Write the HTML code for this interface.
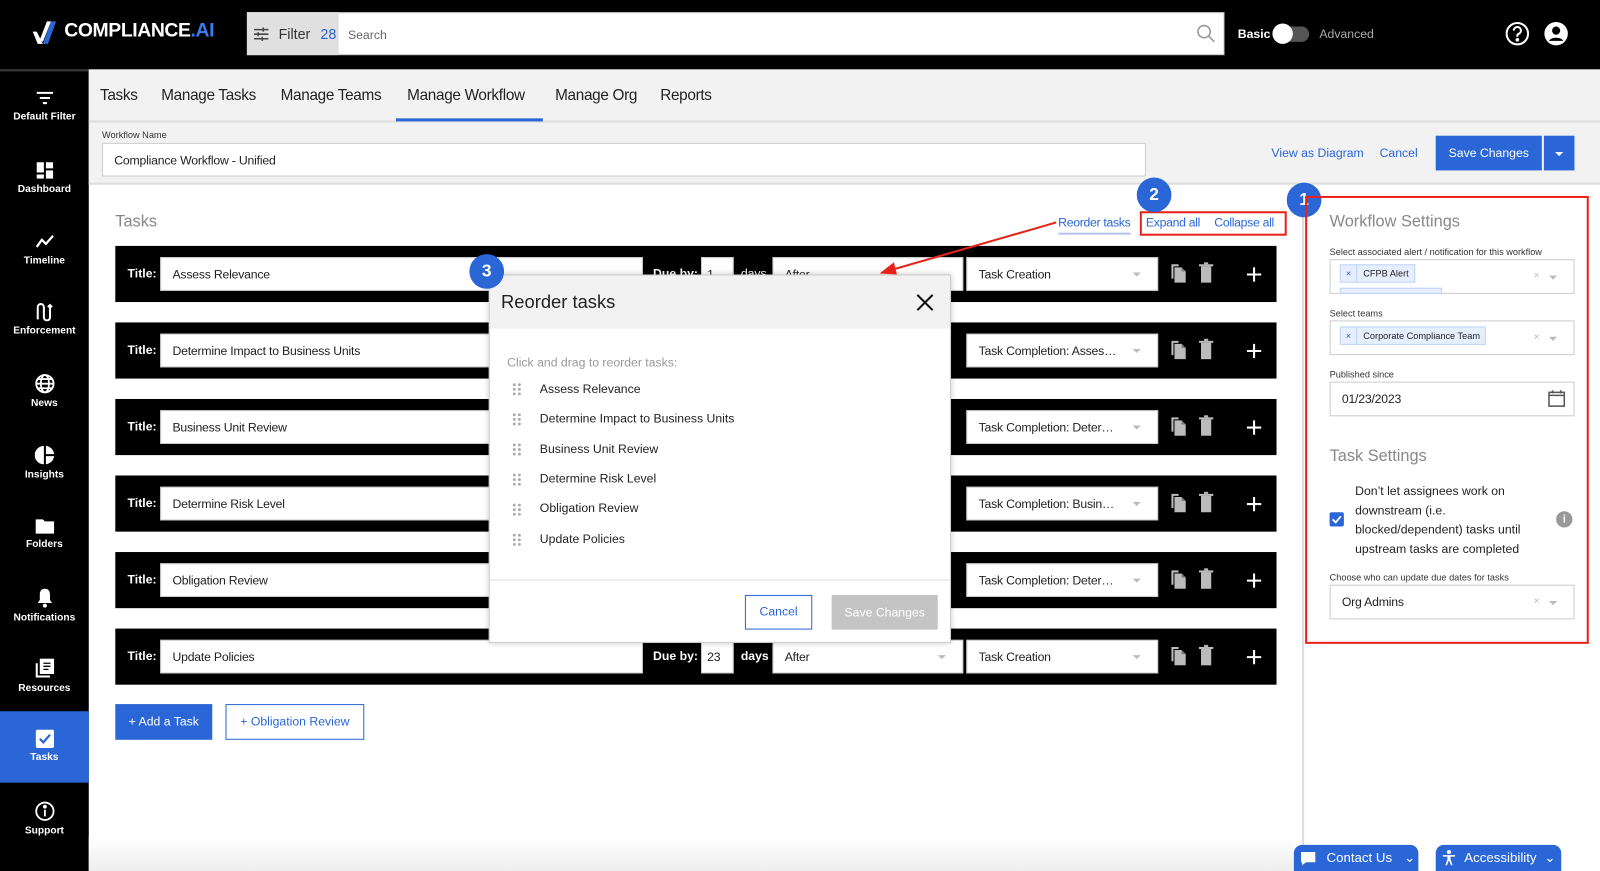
<!DOCTYPE html>
<html><head><meta charset="utf-8"><style>
*{box-sizing:border-box;margin:0;padding:0}
html,body{width:1600px;height:871px;overflow:hidden;background:#fff}
#w{position:absolute;left:0;top:0;width:1568px;height:854px;transform:scale(1.020408);transform-origin:0 0;font-family:"Liberation Sans",sans-serif;color:#222;overflow:hidden}
.a{position:absolute}
.t{position:absolute;white-space:nowrap}
.blue{color:#2a66d6}
.nav{position:absolute;left:0;width:87px;text-align:center;color:#fff;font-size:10px;font-weight:bold}
.nav svg{display:block;margin:0 auto 4px}
.row{position:absolute;left:113px;width:1138px;height:55px;background:#000}
.inp{position:absolute;background:#fff;border:1px solid #ccc;font-size:12px;padding-left:11px;display:flex;align-items:center;white-space:nowrap;overflow:hidden;letter-spacing:-0.2px}
.lbl{position:absolute;color:#fff;font-size:12px;font-weight:bold}
.dd{position:absolute;width:0;height:0;border-left:4px solid transparent;border-right:4px solid transparent;border-top:4px solid #bbb}
.badge{position:absolute;width:34px;height:34px;border-radius:50%;background:#2a66d6;color:#fff;font-weight:bold;font-size:17px;text-align:center;line-height:34px}
.small{font-size:9px;color:#333}
.tag{position:absolute;background:#e6efff;border:1px solid #bcd3f7;font-size:9px;height:18px;line-height:16px;padding:0 5px 0 0;white-space:nowrap}
.tag b{display:inline-block;width:16px;text-align:center;color:#2a66d6;font-weight:normal;border-right:1px solid #bcd3f7;margin-right:6px}
.tab{position:absolute;top:85px;font-size:15px;letter-spacing:-0.3px;white-space:nowrap}
</style></head><body><div id="w">
<div class="a" style="left:0;top:0;width:1568px;height:68px;background:#000"></div>
<svg class="a" style="left:30px;top:19px" width="30" height="25" viewBox="0 0 30 25"><path d="M2 12 L7 24 L12 24 L6 12Z" fill="#fff"/><path d="M12 24 L20 2 L25 2 L17 24Z" fill="#2a66d6"/><path d="M9 20 L16 2 L20 2 L12 22Z" fill="#fff"/></svg>
<div class="t" style="left:63px;top:20px;color:#fff;font-weight:bold;font-size:19px;letter-spacing:-0.4px">COMPLIANCE<span style="color:#3a7bf0">.AI</span></div>
<div class="a" style="left:242px;top:12px;width:958px;height:42px;background:#fff;border:1px solid #ccc"></div>
<div class="a" style="left:242px;top:12px;width:90px;height:42px;background:#e0e0e0"></div>
<svg class="a" style="left:248px;top:26px" width="16" height="15" viewBox="0 0 16 15" stroke="#444" stroke-width="1.5"><path d="M1 3H15M1 7.5H15M1 12H15M10 1V5M5 5.5V9.5M9 10V14"/></svg>
<div class="t" style="left:273px;top:25px;font-size:14px;color:#333">Filter <span class="blue" style="margin-left:6px">28</span></div>
<div class="t" style="left:341px;top:27px;font-size:12px;color:#666">Search</div>
<svg class="a" style="left:1172px;top:23px" width="20" height="20" viewBox="0 0 20 20" fill="none" stroke="#999" stroke-width="1.6"><circle cx="8" cy="8" r="6"/><path d="M12.5 12.5L18 18"/></svg>
<div class="t" style="left:1213px;top:26px;color:#fff;font-size:12px;font-weight:bold">Basic</div>
<div class="a" style="left:1247px;top:26px;width:36px;height:15px;border-radius:8px;background:#555"></div>
<div class="a" style="left:1247px;top:23px;width:20px;height:20px;border-radius:50%;background:#fff"></div>
<div class="t" style="left:1293px;top:26px;color:#aaa;font-size:12px">Advanced</div>
<svg class="a" style="left:1475px;top:21px" width="24" height="24" viewBox="0 0 24 24" fill="none" stroke="#fff" stroke-width="2"><circle cx="12" cy="12" r="10.5"/><path d="M8.5 9a3.5 3.5 0 1 1 4.5 3.3c-.7.3-1 .8-1 1.7v1"/><circle cx="12" cy="18" r=".8" fill="#fff"/></svg>
<svg class="a" style="left:1513px;top:21px" width="24" height="24" viewBox="0 0 24 24"><circle cx="12" cy="12" r="11.5" fill="#fff"/><circle cx="12" cy="9" r="4" fill="#000"/><path d="M5 19c2-4 12-4 14 0" fill="#000"/></svg>
<div class="a" style="left:0;top:68px;width:87px;height:786px;background:#000;border-top:2px solid #333"></div>
<div class="a" style="left:0;top:697px;width:87px;height:70px;background:#2a66d6"></div>
<div class="nav" style="top:89px"><svg width="18" height="16" viewBox="0 0 18 16" stroke="#fff" stroke-width="2"><path d="M1 2H17M4 7H14M7 12H11"/></svg>Default Filter</div>
<div class="nav" style="top:158px"><svg width="18" height="18" viewBox="0 0 18 18" fill="#fff"><rect x="1" y="1" width="7" height="10"/><rect x="10" y="1" width="7" height="6"/><rect x="10" y="9" width="7" height="8"/><rect x="1" y="13" width="7" height="4"/></svg>Dashboard</div>
<div class="nav" style="top:228px"><svg width="20" height="18" viewBox="0 0 20 18" fill="none" stroke="#fff" stroke-width="2.2"><path d="M2 14L7 7L11 11L18 3"/></svg>Timeline</div>
<div class="nav" style="top:297px"><svg width="20" height="18" viewBox="0 0 20 18" fill="none" stroke="#fff" stroke-width="2"><path d="M3 16V4a3 3 0 0 1 6 0v10a3 3 0 0 0 6 0V2M13 4l2-2 2 2"/></svg>Enforcement</div>
<div class="nav" style="top:366px"><svg width="20" height="20" viewBox="0 0 20 20" fill="none" stroke="#fff" stroke-width="1.8"><circle cx="10" cy="10" r="8.5"/><ellipse cx="10" cy="10" rx="4" ry="8.5"/><path d="M1.5 10H18.5M3 5.5H17M3 14.5H17"/></svg>News</div>
<div class="nav" style="top:436px"><svg width="20" height="20" viewBox="0 0 20 20" fill="#fff"><path d="M9 1A9 9 0 0 0 9 19Z"/><path d="M11 1A9 9 0 0 1 19 9H11Z"/><path d="M11 11H19A9 9 0 0 1 11 19Z"/></svg>Insights</div>
<div class="nav" style="top:507px"><svg width="20" height="17" viewBox="0 0 20 17" fill="#fff"><path d="M1 2h7l2 2h9v12H1Z"/></svg>Folders</div>
<div class="nav" style="top:576px"><svg width="18" height="20" viewBox="0 0 18 20" fill="#fff"><path d="M9 1c-4 0-5 3-5 6v5l-2 3h14l-2-3V7c0-3-1-6-5-6z"/><circle cx="9" cy="17.5" r="2"/></svg>Notifications</div>
<div class="nav" style="top:645px"><svg width="20" height="20" viewBox="0 0 20 20" fill="none" stroke="#fff" stroke-width="2"><rect x="6" y="1.5" width="12" height="13" fill="#fff"/><path d="M2 5v13h13"/><path d="M8.5 5h7M8.5 8h7M8.5 11h5" stroke="#000" stroke-width="1.3"/></svg>Resources</div>
<div class="nav" style="top:715px"><svg width="18" height="18" viewBox="0 0 18 18"><rect x="0" y="0" width="18" height="18" rx="2" fill="#fff"/><path d="M4 9l3.5 3.5L14 5" fill="none" stroke="#2a66d6" stroke-width="2.2"/></svg>Tasks</div>
<div class="nav" style="top:785px"><svg width="20" height="20" viewBox="0 0 20 20" fill="none" stroke="#fff" stroke-width="1.8"><circle cx="10" cy="10" r="8.5"/><path d="M10 8.5V15"/><circle cx="10" cy="5.5" r="1" fill="#fff"/></svg>Support</div>
<div class="a" style="left:87px;top:68px;width:1481px;height:113px;background:#f2f2f2;border-bottom:2px solid #ddd"></div>
<div class="a" style="left:87px;top:118px;width:1481px;height:2px;background:#ddd"></div>
<div class="a" style="left:388px;top:116px;width:144px;height:3px;background:#2a66d6"></div>
<div class="tab" style="left:98px">Tasks</div>
<div class="tab" style="left:158px">Manage Tasks</div>
<div class="tab" style="left:275px">Manage Teams</div>
<div class="tab" style="left:399px">Manage Workflow</div>
<div class="tab" style="left:544px">Manage Org</div>
<div class="tab" style="left:647px">Reports</div>
<div class="t small" style="left:100px;top:127px">Workflow Name</div>
<div class="inp" style="left:100px;top:140px;width:1023px;height:33px;font-size:12px">Compliance Workflow - Unified</div>
<div class="t blue" style="left:1246px;top:143px;font-size:12px">View as Diagram</div>
<div class="t blue" style="left:1352px;top:143px;font-size:12px">Cancel</div>
<div class="a" style="left:1407px;top:133px;width:104px;height:34px;background:#2a66d6;color:#fff;font-size:12px;text-align:center;line-height:34px">Save Changes</div>
<div class="a" style="left:1513px;top:133px;width:30px;height:34px;background:#2a66d6"></div>
<div class="dd" style="left:1524px;top:149px;border-top-color:#fff"></div>
<div class="a" style="left:1276px;top:181px;width:2px;height:673px;background:#ddd"></div>
<div class="t" style="left:113px;top:209px;font-size:16px;color:#888">Tasks</div>
<div class="t blue" style="left:1037px;top:211px;font-size:12px;border-bottom:2px solid #b8c4f0;padding-bottom:3px;letter-spacing:-0.3px">Reorder tasks</div>
<div class="a" style="left:1117px;top:207px;width:144px;height:24px;border:2px solid #e8231c"></div>
<div class="t blue" style="left:1123px;top:211px;font-size:12px;letter-spacing:-0.3px">Expand all</div>
<div class="t blue" style="left:1190px;top:211px;font-size:12px;letter-spacing:-0.3px">Collapse all</div>
<div class="row" style="top:241px"></div><div class="row" style="top:316px"></div><div class="row" style="top:391px"></div><div class="row" style="top:466px"></div><div class="row" style="top:541px"></div><div class="row" style="top:616px"></div>
<div class="lbl" style="left:125px;top:261px">Title:</div><div class="inp" style="left:157px;top:252px;width:473px;height:33px">Assess Relevance</div>
<div class="lbl" style="left:125px;top:336px">Title:</div><div class="inp" style="left:157px;top:327px;width:473px;height:33px">Determine Impact to Business Units</div>
<div class="lbl" style="left:125px;top:411px">Title:</div><div class="inp" style="left:157px;top:402px;width:473px;height:33px">Business Unit Review</div>
<div class="lbl" style="left:125px;top:486px">Title:</div><div class="inp" style="left:157px;top:477px;width:473px;height:33px">Determine Risk Level</div>
<div class="lbl" style="left:125px;top:561px">Title:</div><div class="inp" style="left:157px;top:552px;width:473px;height:33px">Obligation Review</div>
<div class="lbl" style="left:125px;top:636px">Title:</div><div class="inp" style="left:157px;top:627px;width:473px;height:33px">Update Policies</div>
<div class="lbl" style="left:640px;top:261px">Due by:</div><div class="inp" style="left:687px;top:252px;width:32px;height:33px;padding-left:5px">1</div><div class="lbl" style="left:726px;top:261px;font-weight:normal">days</div><div class="inp" style="left:757px;top:252px;width:187px;height:33px">After</div>
<div class="lbl" style="left:640px;top:636px">Due by:</div><div class="inp" style="left:687px;top:627px;width:32px;height:33px;padding-left:5px">23</div><div class="lbl" style="left:726px;top:636px">days</div><div class="inp" style="left:757px;top:627px;width:187px;height:33px">After</div><div class="dd" style="left:919px;top:642px"></div>
<div class="inp" style="left:947px;top:252px;width:188px;height:33px">Task Creation</div><div class="dd" style="left:1110px;top:267px"></div>
<div class="inp" style="left:947px;top:327px;width:188px;height:33px">Task Completion: Asses…</div><div class="dd" style="left:1110px;top:342px"></div>
<div class="inp" style="left:947px;top:402px;width:188px;height:33px">Task Completion: Deter…</div><div class="dd" style="left:1110px;top:417px"></div>
<div class="inp" style="left:947px;top:477px;width:188px;height:33px">Task Completion: Busin…</div><div class="dd" style="left:1110px;top:492px"></div>
<div class="inp" style="left:947px;top:552px;width:188px;height:33px">Task Completion: Deter…</div><div class="dd" style="left:1110px;top:567px"></div>
<div class="inp" style="left:947px;top:627px;width:188px;height:33px">Task Creation</div><div class="dd" style="left:1110px;top:642px"></div>
<svg class="a" style="left:1146px;top:257px" width="100" height="400" viewBox="0 0 100 400">
<defs><g id="ic"><path d="M2 2h7v2H4v12H2Z" fill="#bbb"/><path d="M5 5h7l4 4v11H5Z" fill="#bbb"/><path d="M12 5v4h4" fill="#777"/><rect x="31" y="4" width="10" height="16" fill="#bbb"/><rect x="29" y="2" width="14" height="2" fill="#bbb"/><rect x="34" y="0" width="4" height="2" fill="#bbb"/><path d="M83 5v14M76 12h14" stroke="#fff" stroke-width="2"/></g></defs>
<use href="#ic" y="0"/><use href="#ic" y="75"/><use href="#ic" y="150"/><use href="#ic" y="225"/><use href="#ic" y="300"/><use href="#ic" y="375"/></svg>
<div class="a" style="left:113px;top:690px;width:95px;height:35px;background:#2a66d6;color:#fff;font-size:12px;text-align:center;line-height:35px">+ Add a Task</div>
<div class="a" style="left:221px;top:690px;width:136px;height:35px;border:1.5px solid #2a66d6;color:#2a66d6;font-size:12px;text-align:center;line-height:32px">+ Obligation Review</div>
<div class="a" style="left:479px;top:269px;width:453px;height:361px;background:#fff;border:1px solid #ccc;box-shadow:0 0 6px rgba(0,0,0,.25)"></div>
<div class="a" style="left:480px;top:270px;width:451px;height:52px;background:#f2f2f2"></div>
<div class="t" style="left:491px;top:286px;font-size:18px;color:#222">Reorder tasks</div>
<svg class="a" style="left:898px;top:288px" width="17" height="17" viewBox="0 0 17 17" stroke="#111" stroke-width="2"><path d="M1 1L16 16M16 1L1 16"/></svg>
<div class="t" style="left:497px;top:348px;font-size:12px;color:#999">Click and drag to reorder tasks:</div>
<svg class="a" style="left:502px;top:375px" width="10" height="160" viewBox="0 0 10 160" fill="#aaa">
<defs><g id="g6"><circle cx="2" cy="2" r="1.4"/><circle cx="7" cy="2" r="1.4"/><circle cx="2" cy="6.5" r="1.4"/><circle cx="7" cy="6.5" r="1.4"/><circle cx="2" cy="11" r="1.4"/><circle cx="7" cy="11" r="1.4"/></g></defs>
<use href="#g6" y="0"/><use href="#g6" y="29.5"/><use href="#g6" y="59"/><use href="#g6" y="88.5"/><use href="#g6" y="118"/><use href="#g6" y="147.5"/></svg>
<div class="t" style="left:529px;top:374px;font-size:12px">Assess Relevance</div>
<div class="t" style="left:529px;top:403px;font-size:12px">Determine Impact to Business Units</div>
<div class="t" style="left:529px;top:433px;font-size:12px">Business Unit Review</div>
<div class="t" style="left:529px;top:462px;font-size:12px">Determine Risk Level</div>
<div class="t" style="left:529px;top:491px;font-size:12px">Obligation Review</div>
<div class="t" style="left:529px;top:521px;font-size:12px">Update Policies</div>
<div class="a" style="left:480px;top:568px;width:451px;height:1px;background:#ddd"></div>
<div class="a" style="left:730px;top:583px;width:66px;height:34px;border:1.5px solid #2a66d6;color:#2a66d6;font-size:12px;text-align:center;line-height:31px">Cancel</div>
<div class="a" style="left:815px;top:583px;width:104px;height:34px;background:#c4c4c4;color:#fff;font-size:12px;text-align:center;line-height:34px">Save Changes</div>
<svg class="a" style="left:850px;top:210px" width="200" height="70" viewBox="0 0 200 70"><path d="M185 8L22 55" stroke="#e8231c" stroke-width="2"/><path d="M12 58L26 47L29 59Z" fill="#e8231c"/></svg>
<div class="badge" style="left:460px;top:249px">3</div>
<div class="badge" style="left:1114px;top:174px">2</div>
<div class="badge" style="left:1261px;top:179px">1</div>
<div class="a" style="left:1279px;top:192px;width:278px;height:439px;border:2px solid #e8231c"></div>
<div class="t" style="left:1303px;top:209px;font-size:16px;color:#888">Workflow Settings</div>
<div class="t small" style="left:1303px;top:242px">Select associated alert / notification for this workflow</div>
<div class="a" style="left:1303px;top:254px;width:240px;height:34px;border:1px solid #ccc;overflow:hidden"></div>
<div class="tag" style="left:1313px;top:259px"><b>×</b>CFPB Alert</div>
<div class="a" style="left:1313px;top:282px;width:100px;height:6px;border:1px solid #bcd3f7;background:#e6efff"></div>
<div class="t" style="left:1503px;top:265px;font-size:10px;color:#bbb">×</div><div class="dd" style="left:1518px;top:270px"></div>
<div class="t small" style="left:1303px;top:302px">Select teams</div>
<div class="a" style="left:1303px;top:314px;width:240px;height:34px;border:1px solid #ccc"></div>
<div class="tag" style="left:1313px;top:320px"><b>×</b>Corporate Compliance Team</div>
<div class="t" style="left:1503px;top:325px;font-size:10px;color:#bbb">×</div><div class="dd" style="left:1518px;top:330px"></div>
<div class="t small" style="left:1303px;top:362px">Published since</div>
<div class="inp" style="left:1303px;top:374px;width:240px;height:34px;font-size:12px">01/23/2023</div>
<svg class="a" style="left:1517px;top:382px" width="17" height="17" viewBox="0 0 17 17" fill="none" stroke="#555" stroke-width="1.5"><rect x="1" y="2.5" width="15" height="13.5"/><path d="M1 5.5H16M4.5 0.5v3M12.5 0.5v3"/></svg>
<div class="t" style="left:1303px;top:439px;font-size:16px;color:#888">Task Settings</div>
<div class="a" style="left:1303px;top:502px;width:14px;height:14px;border-radius:2px;background:#2a66d6"></div>
<svg class="a" style="left:1303px;top:502px" width="14" height="14" viewBox="0 0 14 14"><path d="M3 7l3 3 5-6" stroke="#fff" stroke-width="1.8" fill="none"/></svg>
<div class="a" style="left:1328px;top:472px;font-size:12px;line-height:19px;width:190px">Don’t let assignees work on downstream (i.e. blocked/dependent) tasks until upstream tasks are completed</div>
<div class="a" style="left:1525px;top:501px;width:16px;height:16px;border-radius:50%;background:#999;color:#fff;font-size:11px;font-weight:bold;text-align:center;line-height:16px">i</div>
<div class="t small" style="left:1303px;top:561px">Choose who can update due dates for tasks</div>
<div class="inp" style="left:1303px;top:573px;width:240px;height:34px;font-size:12px">Org Admins</div>
<div class="t" style="left:1503px;top:584px;font-size:10px;color:#bbb">×</div><div class="dd" style="left:1518px;top:589px"></div>
<div class="a" style="left:87px;top:820px;width:1181px;height:34px;background:linear-gradient(#fff,#eee)"></div>
<div class="a" style="left:1268px;top:828px;width:122px;height:30px;background:#2a66d6;border-radius:8px 8px 0 0;color:#fff;font-size:13px;line-height:26px;padding-left:32px">Contact Us <span style="margin-left:8px">⌄</span></div>
<svg class="a" style="left:1274px;top:834px" width="16" height="15" viewBox="0 0 16 15"><path d="M1 1h14v10H6l-4 3v-3H1Z" fill="#fff"/></svg>
<div class="a" style="left:1407px;top:828px;width:123px;height:30px;background:#2a66d6;border-radius:8px 8px 0 0;color:#fff;font-size:13px;line-height:26px;padding-left:28px">Accessibility <span style="margin-left:4px">⌄</span></div>
<svg class="a" style="left:1413px;top:833px" width="14" height="16" viewBox="0 0 14 16" fill="#fff"><circle cx="7" cy="2" r="2"/><path d="M1 5h12v1.5H8.5V9l2 6H9l-2-5-2 5H3.5l2-6V6.5H1Z"/></svg>
</div></body></html>
